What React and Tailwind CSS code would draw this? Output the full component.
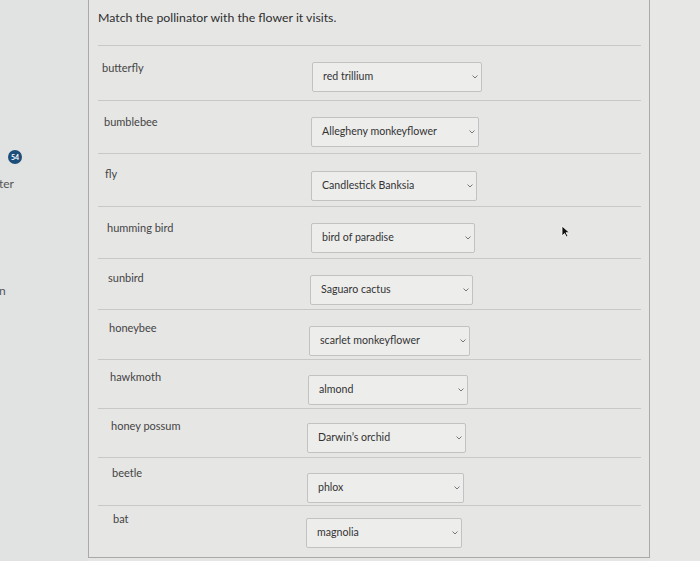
import React from "react";

const rows = [
  { label: "butterfly", value: "red trillium", row: "h-[55px]", lab: "w-[214px] pl-[4px] pt-[15px]", box: "w-[170px] mt-[16px]" },
  { label: "bumblebee", value: "Allegheny monkeyflower", row: "h-[53px]", lab: "w-[213px] pl-[6px] pt-[14px]", box: "w-[168px] mt-[16px]" },
  { label: "fly", value: "Candlestick Banksia", row: "h-[53px]", lab: "w-[213px] pl-[7px] pt-[13px]", box: "w-[166px] mt-[17px]" },
  { label: "humming bird", value: "bird of paradise", row: "h-[52px]", lab: "w-[213px] pl-[9px] pt-[14px]", box: "w-[164px] mt-[16px]" },
  { label: "sunbird", value: "Saguaro cactus", row: "h-[51px]", lab: "w-[212px] pl-[10px] pt-[12px]", box: "w-[163px] mt-[16px]" },
  { label: "honeybee", value: "scarlet monkeyflower", row: "h-[50px]", lab: "w-[211px] pl-[11px] pt-[11px]", box: "w-[161px] mt-[16px]" },
  { label: "hawkmoth", value: "almond", row: "h-[49px]", lab: "w-[210px] pl-[12px] pt-[10px]", box: "w-[160px] mt-[15px]" },
  { label: "honey possum", value: "Darwin’s orchid", row: "h-[49px]", lab: "w-[209px] pl-[13px] pt-[10px]", box: "w-[159px] mt-[14px]" },
  { label: "beetle", value: "phlox", row: "h-[48px]", lab: "w-[209px] pl-[14px] pt-[8px]", box: "w-[157px] mt-[15px]" },
  { label: "bat", value: "magnolia", row: "flex-1", lab: "w-[208px] pl-[15px] pt-[6px]", box: "w-[156px] mt-[12px]" },
];

const Chevron = () => (
  <svg width="6" height="4" viewBox="0 0 6 4" className="shrink-0">
    <path d="M0.8 0.8l2.2 2.2 2.2-2.2" fill="none" stroke="#777" strokeWidth="1" strokeLinecap="round" strokeLinejoin="round" />
  </svg>
);

const Select = ({ value, className }) => (
  <div className={`${className} h-[30px] flex items-center justify-between pl-[10px] pr-[3px] border border-[#c2c2c2] bg-[#ededec] rounded-[2px] text-[10.6px] text-[#333]`}>
    <span>{value}</span>
    <Chevron />
  </div>
);

export default function App() {
  return (
    <div
      className="relative w-[700px] h-[561px] flex overflow-hidden bg-[#e5e5e4]"
      style={{ fontFamily: "Lato, 'Open Sans', sans-serif" }}
    >
      <div className="w-[88px] shrink-0 bg-[#e1e2e2] pt-[150px]">
        <div className="ml-[8px] w-[14px] h-[14px] rounded-full bg-[#1d4e7b] flex items-center justify-center text-[7px] font-bold text-white">
          54
        </div>
        <div className="mt-[13px] -ml-[1px] text-[12px] leading-[14px] text-[#555]">ter</div>
        <div className="mt-[93px] -ml-[1px] text-[12px] leading-[14px] text-[#555]">n</div>
      </div>

      <div className="w-[562px] h-[558px] shrink-0 flex flex-col border-l border-r border-b border-[#a9a9a9] bg-[#e6e6e5] pl-[9px] pr-[8px]">
        <div className="h-[45px] shrink-0 pt-[10px] text-[12.3px] leading-[16px] text-[#2e2e2e]">
          Match the pollinator with the flower it visits.
        </div>
        {rows.map((r) => (
          <div key={r.label} className={`${r.row} shrink-0 flex items-start border-t border-[#c8c8c8]`}>
            <div className={`${r.lab} shrink-0 text-[11px] leading-[14px] text-[#444]`}>{r.label}</div>
            <Select value={r.value} className={r.box} />
          </div>
        ))}
      </div>

      <div className="flex-1 bg-[#e7e7e6]" />

      <svg className="absolute left-[561px] top-[225px]" width="9" height="13" viewBox="0 0 9 13">
        <path d="M1 1v10l2.5-2.5 2 3.5 1.5-1-2-3.3H8.5z" fill="#111" stroke="#fff" strokeWidth="0.8" />
      </svg>
    </div>
  );
}
